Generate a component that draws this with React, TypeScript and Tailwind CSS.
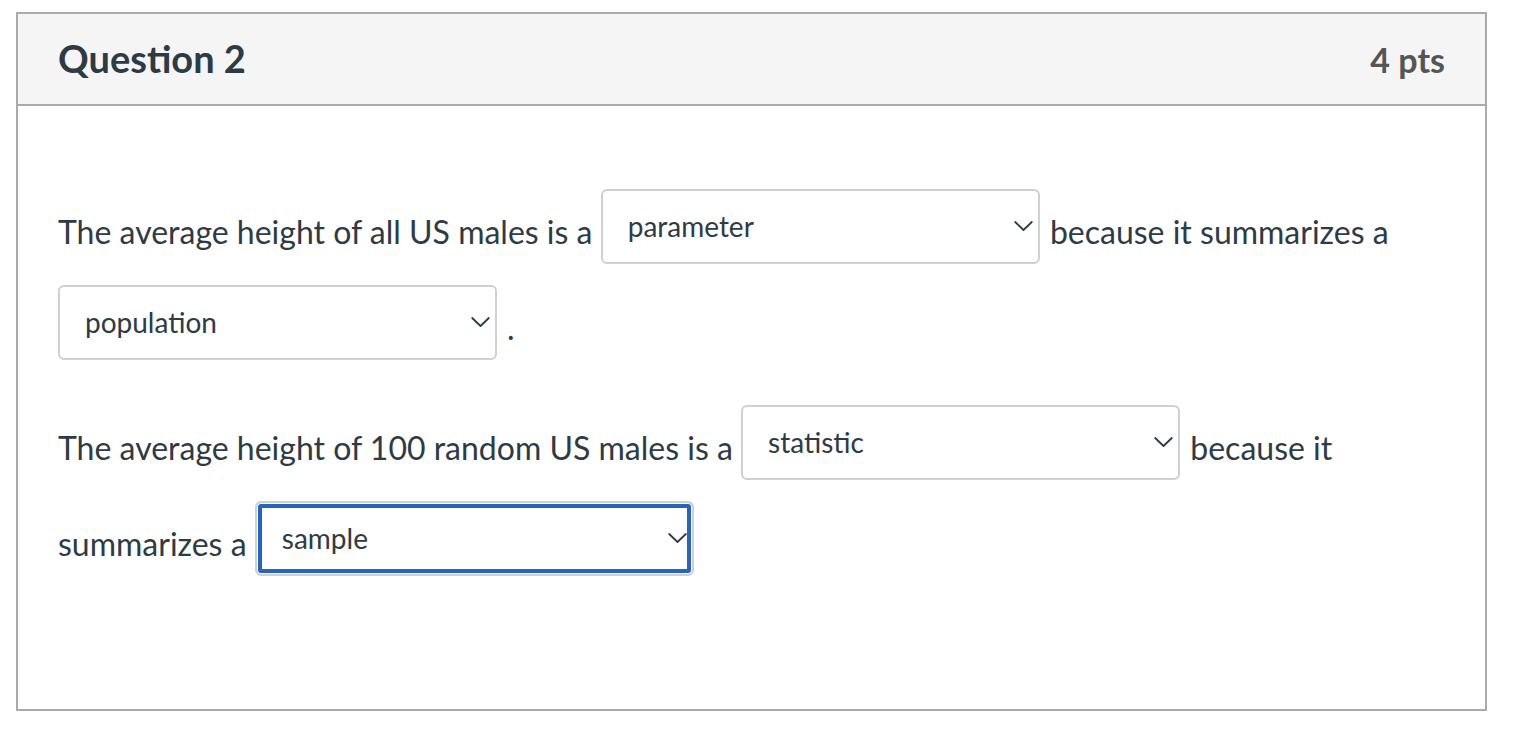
import clsx from "clsx";

type DropdownProps = {
  value: string;
  options: string[];
  focused?: boolean;
};

function Dropdown({ value, options, focused }: DropdownProps) {
  return (
    <span className="relative inline-flex align-[7px]">
      <select
        defaultValue={value}
        className={clsx(
          "h-[75px] w-[439px] appearance-none rounded-md border-2 border-[#cdd1d4] bg-white pl-[25px] pr-10 text-[28px] leading-normal text-[#2d3b45] outline-none",
          focused && "shadow-[inset_0_0_0_1px_#ffffff,inset_0_0_0_5px_#2563c6]"
        )}
      >
        {options.map((o) => (
          <option key={o}>{o}</option>
        ))}
      </select>
      <svg
        className="pointer-events-none absolute right-[7px] top-1/2 -translate-y-1/2"
        width="19"
        height="11"
        viewBox="0 0 19 11"
        fill="none"
      >
        <path d="M1.2 1.5 L9.5 9.5 L17.8 1.5" stroke="#2d3b45" strokeWidth="1.8" strokeLinecap="round" strokeLinejoin="round" />
      </svg>
    </span>
  );
}

const kind = ["[ Select ]", "parameter", "statistic"];
const group = ["[ Select ]", "population", "sample"];

export default function App() {
  return (
    <main className="min-h-screen bg-white pl-4 pt-3 font-['Lato','Liberation_Sans',sans-serif] text-[#2d3b45]">
      <div className="w-[1471px] border-2 border-[#aaaaaa]">
        {/* Header */}
        <div className="flex h-[92px] items-baseline justify-between border-b-2 border-[#aaaaaa] bg-[#f5f5f5] pl-10 pr-10 pt-[25px] leading-none">
          <h2 className="text-[38px] font-bold">Question 2</h2>
          <span className="text-[34px] font-bold text-[#555555]">4 pts</span>
        </div>

        {/* Question body */}
        <div className="px-10 pt-[78px] pb-[117px] text-[32px] leading-[96px]">
          <p>
            The average height of all US males is a{" "}
            <Dropdown value="parameter" options={kind} />{" "}
            <span className="ml-0.5">because it summarizes a</span>{" "}
            <Dropdown value="population" options={group} />
            <span className="ml-2.5">.</span>
          </p>
          <p className="mt-6">
            The average height of 100 random US males is a{" "}
            <Dropdown value="statistic" options={kind} />{" "}
            <span className="ml-0.5">because it</span> summarizes a{" "}
            <Dropdown value="sample" options={group} focused />
          </p>
        </div>
      </div>
    </main>
  );
}
